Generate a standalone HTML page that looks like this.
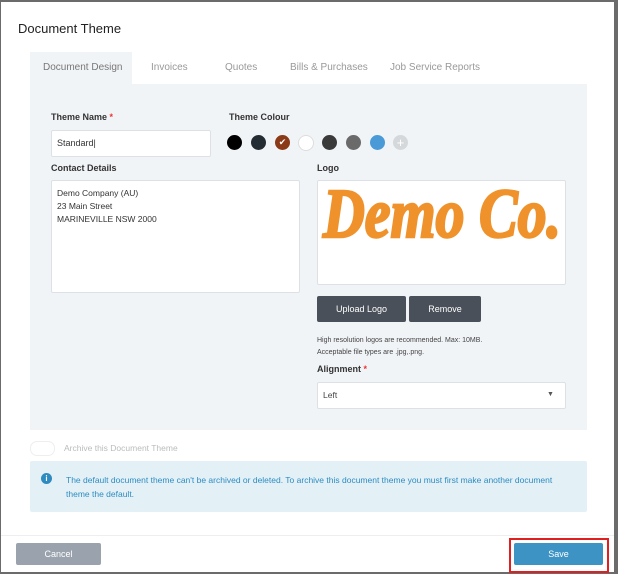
<!DOCTYPE html>
<html><head><style>
body{margin:0;width:618px;height:574px;background:#6b6b6b;font-family:"Liberation Sans",sans-serif;position:relative;overflow:hidden}
.m{position:absolute;left:1px;top:2px;width:613px;height:570px;background:#fff}
.a{position:absolute}
.lbl{font-size:9px;color:#333;font-weight:bold}
.inp{background:#fff;border:1px solid #dde1e5;border-radius:2px;position:absolute}
.dot{position:absolute;top:135px;width:15px;height:15px;border-radius:50%}
</style></head><body>
<div class="m"></div>
<div class="a" style="left:18px;top:21px;font-size:13px;color:#222">Document Theme</div>
<div class="a" style="left:30px;top:52px;width:557px;height:378px;background:#f1f4f7"></div>
<div class="a" style="left:132px;top:52px;width:455px;height:32px;background:#fff"></div>
<div class="a" style="top:62px;font-size:10px;color:#777;left:43px">Document Design</div>
<div class="a" style="top:62px;font-size:10px;color:#999;left:151px">Invoices</div>
<div class="a" style="top:62px;font-size:10px;color:#999;left:225px">Quotes</div>
<div class="a" style="top:62px;font-size:10px;color:#999;left:290px">Bills &amp; Purchases</div>
<div class="a" style="top:62px;font-size:10px;color:#999;left:390px">Job Service Reports</div>
<div class="a lbl" style="left:51px;top:112px">Theme Name <span style="color:#e33">*</span></div>
<div class="a lbl" style="left:229px;top:112px">Theme Colour</div>
<div class="inp" style="left:51px;top:130px;width:158px;height:25px"></div>
<div class="a" style="left:57px;top:138px;font-size:9px;color:#333">Standard|</div>
<div class="dot" style="left:227px;background:#000"></div>
<div class="dot" style="left:251px;background:#232b33"></div>
<div class="dot" style="left:275px;background:#8b3a18;color:#fff;font-size:9px;text-align:center;line-height:15px">✔</div>
<div class="dot" style="left:298px;background:#fff;border:1px solid #ddd;width:14px;height:14px"></div>
<div class="dot" style="left:322px;background:#3a3a3a"></div>
<div class="dot" style="left:346px;background:#6a6a6a"></div>
<div class="dot" style="left:370px;background:#4a9ad8"></div>
<div class="dot" style="left:393px;background:#d5d8db;color:#fff;font-size:13px;text-align:center;line-height:15px">+</div>
<div class="a lbl" style="left:51px;top:163px">Contact Details</div>
<div class="a lbl" style="left:317px;top:163px">Logo</div>
<div class="inp" style="left:51px;top:180px;width:247px;height:111px"></div>
<div class="a" style="left:57px;top:187px;font-size:8.5px;color:#333;line-height:13px">Demo Company (AU)<br>23 Main Street<br>MARINEVILLE NSW 2000</div>
<div class="inp" style="left:317px;top:180px;width:247px;height:103px;overflow:hidden">
<svg width="247" height="103" style="position:absolute;left:0;top:0"><text x="5" y="56" font-family="Liberation Serif" font-weight="bold" font-style="italic" font-size="70" fill="#f0922b" stroke="#f0922b" stroke-width="2.5" textLength="238" lengthAdjust="spacingAndGlyphs">Demo Co.</text></svg></div>
<div class="a" style="left:317px;top:296px;width:89px;height:26px;background:#4a5059;border-radius:2px;color:#fff;font-size:9px;text-align:center;line-height:26px">Upload Logo</div>
<div class="a" style="left:409px;top:296px;width:72px;height:26px;background:#4a5059;border-radius:2px;color:#fff;font-size:9px;text-align:center;line-height:26px">Remove</div>
<div class="a" style="left:317px;top:335px;font-size:7px;color:#444;line-height:12px">High resolution logos are recommended. Max: 10MB.<br>Acceptable file types are .jpg,.png.</div>
<div class="a lbl" style="left:317px;top:364px">Alignment <span style="color:#e33">*</span></div>
<div class="inp" style="left:317px;top:382px;width:247px;height:25px"></div>
<div class="a" style="left:323px;top:390px;font-size:8.5px;color:#444">Left</div>
<div class="a" style="left:547px;top:391px;font-size:7px;color:#555">▼</div>
<div class="a" style="left:30px;top:441px;width:23px;height:13px;border:1px solid #eee;border-radius:7px"></div>
<div class="a" style="left:64px;top:443px;font-size:8.5px;color:#bbb">Archive this Document Theme</div>
<div class="a" style="left:30px;top:461px;width:557px;height:51px;background:#e3f1f7;border-radius:2px"></div>
<div class="a" style="left:41px;top:473px;width:11px;height:11px;border-radius:50%;background:#2e8bc0;color:#fff;font-size:8px;font-weight:bold;text-align:center;line-height:11px">i</div>
<div class="a" style="left:66px;top:473px;width:500px;font-size:8.5px;color:#2e8bc0;line-height:14px">The default document theme can't be archived or deleted. To archive this document theme you must first make another document theme the default.</div>
<div class="a" style="left:1px;top:535px;width:613px;height:1px;background:#eee"></div>
<div class="a" style="left:16px;top:543px;width:85px;height:22px;background:#9aa3ad;border-radius:2px;color:#fff;font-size:9px;text-align:center;line-height:22px">Cancel</div>
<div class="a" style="left:509px;top:538px;width:96px;height:31px;border:2px solid #e02020"></div>
<div class="a" style="left:514px;top:543px;width:89px;height:22px;background:#3d93c4;border-radius:2px;color:#fff;font-size:9px;text-align:center;line-height:22px">Save</div>
</body></html>
